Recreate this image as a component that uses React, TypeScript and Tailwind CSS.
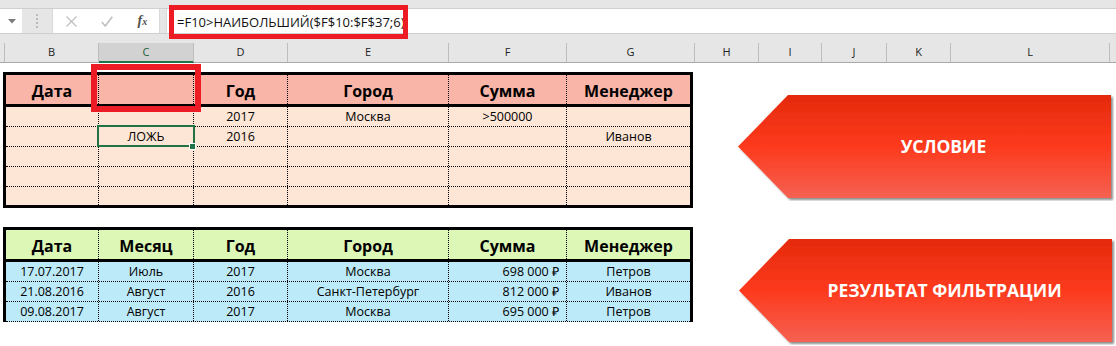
import React from "react";

const COLW = ["w-[92px]", "w-[95px]", "w-[94px]", "w-[161px]", "w-[118px]", "w-[124px]"];

type HeadCol = { label: string; w: string; selected?: boolean };

const HEAD_COLS: HeadCol[] = [
  { label: "", w: "w-[5px]" },
  { label: "B", w: "w-[94px]" },
  { label: "C", w: "w-[95px]", selected: true },
  { label: "D", w: "w-[94px]" },
  { label: "E", w: "w-[161px]" },
  { label: "F", w: "w-[118px]" },
  { label: "G", w: "w-[128px]" },
  { label: "H", w: "w-[64px]" },
  { label: "I", w: "w-[63px]" },
  { label: "J", w: "w-[65px]" },
  { label: "K", w: "w-[64px]" },
  { label: "L", w: "w-[159px]" },
];

function HeaderRow({ labels, bg, pt }: { labels: string[]; bg: string; pt: string }) {
  return (
    <div className={`flex h-[32px] border-b-[3px] border-black ${bg}`}>
      {labels.map((l, i) => (
        <div
          key={i}
          className={`${COLW[i]} flex items-center justify-center ${pt} text-[16px] font-bold leading-none ${
            i > 0 ? "border-l border-dotted border-black" : ""
          }`}
        >
          {l}
        </div>
      ))}
    </div>
  );
}

function DataRow({
  values,
  bg,
  last,
  right,
}: {
  values: string[];
  bg: string;
  last?: boolean;
  right?: number[];
}) {
  return (
    <div className={`flex ${bg} ${last ? "h-[18px]" : "h-[20px] border-b border-dotted border-black"}`}>
      {values.map((v, i) => {
        const isRight = right?.includes(i);
        return (
          <div
            key={i}
            className={`${COLW[i]} flex items-center pt-[2px] ${isRight ? "justify-end pr-[7px]" : "justify-center"} text-[12.5px] whitespace-nowrap ${
              i > 0 ? "border-l border-dotted border-black" : ""
            }`}
          >
            {v}
          </div>
        );
      })}
    </div>
  );
}

function Arrow({ top, left, text }: { top: string; left: string; text: string }) {
  return (
    <div className={`absolute ${top} ${left} w-[376px] h-[106px]`}>
      <svg width="376" height="106" viewBox="0 0 376 106" className="absolute left-0 top-0">
        <defs>
          <linearGradient id={`g-${text.length}`} x1="0" y1="0" x2="0" y2="1">
            <stop offset="0" stopColor="#e42a0c" />
            <stop offset="0.5" stopColor="#fd3a1d" />
            <stop offset="1" stopColor="#f56152" />
          </linearGradient>
          <filter id={`s-${text.length}`} x="-5%" y="-5%" width="115%" height="120%">
            <feGaussianBlur in="SourceAlpha" stdDeviation="1.2" />
            <feOffset dx="1.5" dy="2" result="b" />
            <feComponentTransfer>
              <feFuncA type="linear" slope="0.45" />
            </feComponentTransfer>
            <feMerge>
              <feMergeNode />
              <feMergeNode in="SourceGraphic" />
            </feMerge>
          </filter>
        </defs>
        <polygon
          points="50,0 373,0 373,103 50,103 0,51.5"
          fill={`url(#g-${text.length})`}
          filter={`url(#s-${text.length})`}
        />
      </svg>
      <div className="absolute left-[38px] top-0 w-[335px] h-[103px] flex items-center justify-center text-white font-bold text-[17.5px] leading-none whitespace-nowrap">
        {text}
      </div>
    </div>
  );
}

export default function App() {
  return (
    <div className="relative w-[1116px] h-[346px] overflow-hidden bg-white font-['Open_Sans',sans-serif] text-black">
      {/* top band */}
      <div className="h-[9px] bg-[#e6e6e6] border-b border-[#cfcfcf]" />
      {/* formula row */}
      <div className="h-[25px] flex bg-[#e6e6e6] border-b border-[#cfcfcf]">
        <div className="w-[22px] bg-white flex items-center justify-center pl-[2px]">
          <svg width="8" height="5" viewBox="0 0 8 5">
            <path d="M0 0H8L4 4.5Z" fill="#7a7a7a" />
          </svg>
        </div>
        <div className="w-[30px] flex items-center justify-center">
          <div className="flex flex-col gap-[2px]">
            <div className="w-[2px] h-[2px] bg-[#b9b9b9]" />
            <div className="w-[2px] h-[2px] bg-[#b9b9b9]" />
            <div className="w-[2px] h-[2px] bg-[#b9b9b9]" />
            <div className="w-[2px] h-[2px] bg-[#b9b9b9]" />
          </div>
        </div>
        <div className="w-[108px] bg-white border-x border-[#d9d9d9] flex items-center">
          <div className="w-[37px] flex justify-center">
            <svg width="11" height="11" viewBox="0 0 11 11">
              <path d="M0.5 0.5L10.5 10.5M10.5 0.5L0.5 10.5" stroke="#bdbdbd" strokeWidth="1.2" fill="none" />
            </svg>
          </div>
          <div className="w-[37px] flex justify-center">
            <svg width="12" height="11" viewBox="0 0 12 11">
              <path d="M0.8 6L4.3 10L11.3 0.8" stroke="#bdbdbd" strokeWidth="1.5" fill="none" />
            </svg>
          </div>
          <div className="w-[34px] flex justify-center">
            <span className="font-['Liberation_Serif',serif] italic font-bold text-[14px] leading-none text-[#505050]">
              f<span className="text-[10px]">x</span>
            </span>
          </div>
        </div>
        <div className="w-[6px]" />
        <div className="flex-1 bg-white border-l border-[#d9d9d9] pl-[10px] pt-[4px] text-[13px] whitespace-nowrap text-[#111]">
          =F10&gt;НАИБОЛЬШИЙ($F$10:$F$37;6)
        </div>
      </div>
      {/* gap */}
      <div className="h-[9px] bg-[#e6e6e6]" />
      {/* column headers */}
      <div className="h-[20px] flex bg-[#e6e6e6] text-[11px] text-[#222]">
        {HEAD_COLS.map((c, i) => (
          <div
            key={i}
            className={`${c.w} flex items-center justify-center border-r border-[#bdbdbd] ${
              c.selected ? "bg-[#d2d2d2] border-b-2 border-b-[#217346] text-[#1d5f3a]" : "border-b border-b-[#a9a9a9]"
            }`}
          >
            {c.label}
          </div>
        ))}
        <div className="flex-1 border-b border-b-[#a9a9a9]" />
      </div>

      {/* sheet */}
      <div className="pt-[9px]">
        {/* table 1 */}
        <div className="ml-[3px] w-[690px] border-[3px] border-black">
          <HeaderRow labels={["Дата", "", "Год", "Город", "Сумма", "Менеджер"]} bg="bg-[#f9b5a7]" pt="pt-[3px]" />
          <DataRow values={["", "", "2017", "Москва", ">500000", ""]} bg="bg-[#fde6d6]" />
          <DataRow values={["", "ЛОЖЬ", "2016", "", "", "Иванов"]} bg="bg-[#fde6d6]" />
          <DataRow values={["", "", "", "", "", ""]} bg="bg-[#fde6d6]" />
          <DataRow values={["", "", "", "", "", ""]} bg="bg-[#fde6d6]" />
          <DataRow values={["", "", "", "", "", ""]} bg="bg-[#fde6d6]" last />
        </div>

        {/* table 2 */}
        <div className="mt-[19px] ml-[3px] w-[690px] border-[3px] border-b-0 border-black">
          <HeaderRow labels={["Дата", "Месяц", "Год", "Город", "Сумма", "Менеджер"]} bg="bg-[#ddf7b7]" pt="pt-[2px]" />
          <DataRow values={["17.07.2017", "Июль", "2017", "Москва", "698 000 ₽", "Петров"]} bg="bg-[#bdeaf9]" right={[4]} />
          <DataRow values={["21.08.2016", "Август", "2016", "Санкт-Петербург", "812 000 ₽", "Иванов"]} bg="bg-[#bdeaf9]" right={[4]} />
          <DataRow values={["09.08.2017", "Август", "2017", "Москва", "695 000 ₽", "Петров"]} bg="bg-[#bdeaf9]" right={[4]} />
        </div>
      </div>

      {/* overlays */}
      <div className="absolute left-[169px] top-[5px] w-[239px] h-[34px] border-[5px] border-[#ed1c24]" />
      <div className="absolute left-[91px] top-[64px] w-[110px] h-[48px] border-[6px] border-[#ed1c24]" />
      <div className="absolute left-[97px] top-[125px] w-[98px] h-[22px] border-2 border-[#217346]" />
      <div className="absolute left-[189px] top-[143px] w-[7px] h-[7px] bg-[#217346] border border-white" />

      <Arrow top="top-[95px]" left="left-[738px]" text="УСЛОВИЕ" />
      <Arrow top="top-[239px]" left="left-[739px]" text="РЕЗУЛЬТАТ ФИЛЬТРАЦИИ" />
    </div>
  );
}
